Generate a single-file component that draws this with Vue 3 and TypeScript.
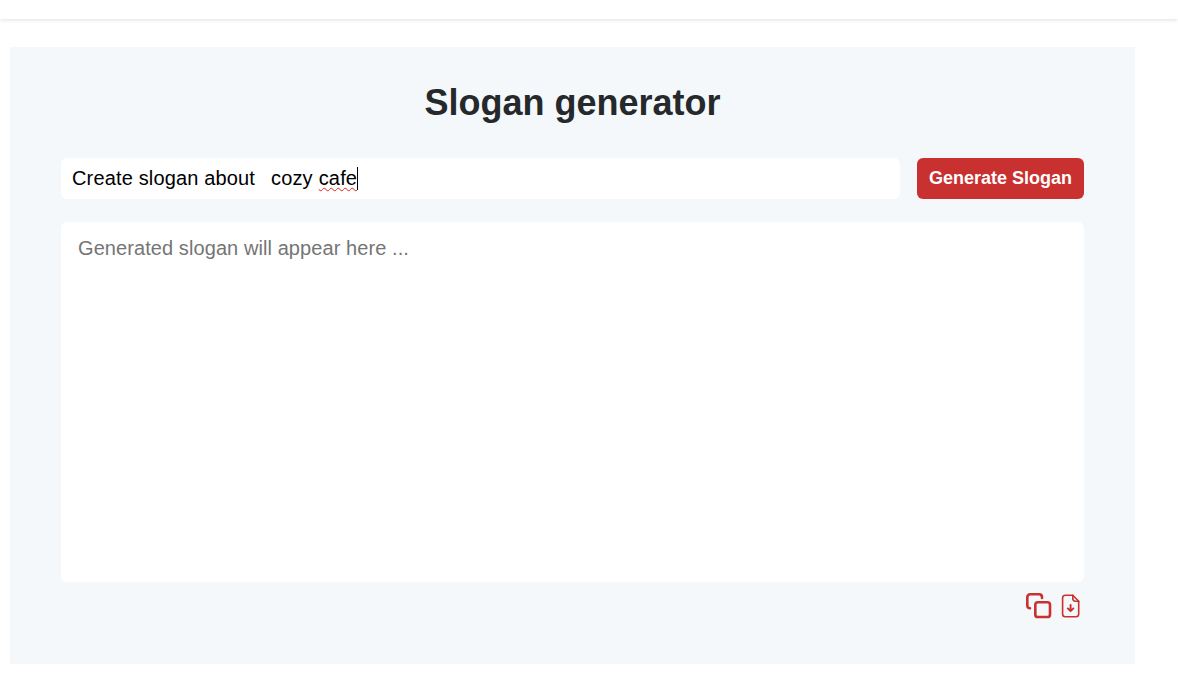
<script setup lang="ts">
import { ref } from 'vue'

const prefix = 'Create slogan about'
const topic = ref('cozy')
const misspelled = ref('cafe')
const placeholder = 'Generated slogan will appear here ...'
</script>

<template>
  <div class="page">
    <header class="topbar"></header>
    <main class="panel">
      <h1 class="title">Slogan generator</h1>
      <div class="form-row">
        <div class="prompt">
          <span class="prefix">{{ prefix }}</span>
          <span class="topic">{{ topic }}</span>
          <span class="squiggle">{{ misspelled }}</span>
          <span class="caret"></span>
        </div>
        <button class="generate" type="button">Generate Slogan</button>
      </div>
      <div class="output">{{ placeholder }}</div>
      <div class="actions">
        <button class="icon-btn copy" type="button" aria-label="Copy">
          <svg width="27" height="26" viewBox="0 0 27 26" fill="none" stroke="#c93030" stroke-width="2.6" stroke-linecap="round" stroke-linejoin="round">
            <rect x="10.3" y="9.3" width="14.7" height="14.7" rx="2.6" />
            <path d="M5 15.2 H4.6 A2.9 2.9 0 0 1 2.3 12.4 V4.2 A2.9 2.9 0 0 1 5.2 1.3 H14.2 A2.9 2.9 0 0 1 17 4.2 V5" />
          </svg>
        </button>
        <button class="icon-btn save" type="button" aria-label="Download">
          <svg width="19" height="24" viewBox="0 0 19 24" fill="none" stroke="#c93030" stroke-width="1.6" stroke-linecap="round" stroke-linejoin="round">
            <path d="M11.8 1.2 H4.4 A2.8 2.8 0 0 0 1.6 4 V20 A2.8 2.8 0 0 0 4.4 22.8 H14.9 A2.8 2.8 0 0 0 17.7 20 V7.2 Z" />
            <path d="M11.8 1.2 V4.8 A2.4 2.4 0 0 0 14.2 7.2 H17.7" />
            <path d="M9.6 11 V17 M6.8 14.4 L9.6 17.2 L12.4 14.4" stroke-width="1.9" />
          </svg>
        </button>
      </div>
    </main>
  </div>
</template>

<style>
html,
body {
  background: #fff;
}
</style>

<style scoped>
.page {
  width: 1178px;
  height: 692px;
  overflow: hidden;
  font-family: "Liberation Sans", Arial, sans-serif;
}

.topbar {
  height: 19px;
  background: #fff;
  box-shadow: 0 1px 4px rgba(0, 0, 0, 0.12);
}

.panel {
  width: 1125px;
  height: 617px;
  margin: 28px 0 0 10px;
  padding: 0 51px;
  box-sizing: border-box;
  background: #f4f8fb;
}

.title {
  margin: 0;
  padding-top: 34px;
  height: 77px;
  box-sizing: border-box;
  font-size: 36px;
  line-height: 43px;
  font-weight: 700;
  text-align: center;
  color: #25292c;
}

.form-row {
  display: flex;
  gap: 17px;
  margin-top: 34px;
}

.prompt {
  flex: 1;
  height: 41px;
  display: flex;
  align-items: center;
  padding-left: 11px;
  background: #fff;
  border-radius: 6px;
  font-size: 20px;
  letter-spacing: 0.15px;
  color: #000;
}

.prefix {
  margin-right: 16px;
}

.topic {
  margin-right: 6px;
}

.squiggle {
  text-decoration: underline wavy #e02020 1px;
  text-underline-offset: 2px;
}

.caret {
  width: 1px;
  height: 23px;
  background: #000;
}

.generate {
  width: 167px;
  height: 41px;
  padding: 0;
  border: none;
  border-radius: 6px;
  background: #c93030;
  color: #fff;
  font-family: inherit;
  font-size: 18px;
  font-weight: 700;
  cursor: pointer;
}

.output {
  height: 360px;
  margin-top: 23px;
  padding: 15px 17px;
  box-sizing: border-box;
  background: #fff;
  border-radius: 6px;
  font-size: 20px;
  line-height: 23px;
  letter-spacing: 0.08px;
  color: #757575;
}

.actions {
  display: flex;
  justify-content: flex-end;
  align-items: center;
  gap: 9px;
  margin-top: 11px;
  padding-right: 4px;
}

.icon-btn {
  display: flex;
  padding: 0;
  border: none;
  background: none;
  cursor: pointer;
}
</style>
